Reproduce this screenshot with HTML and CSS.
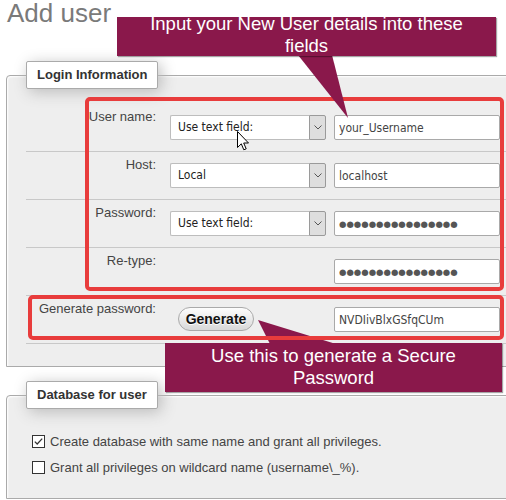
FILE: index.html
```html
<!DOCTYPE html>
<html>
<head>
<meta charset="utf-8">
<title>Add user</title>
<link rel="stylesheet" href="styles.css">
</head>
<body>
<div class="page">
  <h2 class="title">Add user</h2>

  <div class="fs fs-login">
    <div class="legend">Login Information</div>
    <div class="row">
      <div class="label">User name:</div>
      <div class="select"><span class="select-text">Use text field:</span><span class="select-arrow"><svg width="8" height="5" viewBox="0 0 8 5"><polyline points="0.5,0.5 4,4 7.5,0.5" fill="none" stroke="#555" stroke-width="1"/></svg></span></div>
      <input class="text" type="text" value="your_Username">
    </div>
    <div class="row">
      <div class="label">Host:</div>
      <div class="select"><span class="select-text">Local</span><span class="select-arrow"><svg width="8" height="5" viewBox="0 0 8 5"><polyline points="0.5,0.5 4,4 7.5,0.5" fill="none" stroke="#555" stroke-width="1"/></svg></span></div>
      <input class="text" type="text" value="localhost">
    </div>
    <div class="row">
      <div class="label">Password:</div>
      <div class="select"><span class="select-text">Use text field:</span><span class="select-arrow"><svg width="8" height="5" viewBox="0 0 8 5"><polyline points="0.5,0.5 4,4 7.5,0.5" fill="none" stroke="#555" stroke-width="1"/></svg></span></div>
      <input class="text pw" type="text" value="●●●●●●●●●●●●●●●●">
    </div>
    <div class="row">
      <div class="label">Re-type:</div>
      <input class="text pw col3" type="text" value="●●●●●●●●●●●●●●●●">
    </div>
    <div class="row">
      <div class="label">Generate password:</div>
      <div class="btn-cell"><button class="btn" type="button">Generate</button></div>
      <input class="text" type="text" value="NVDIivBlxGSfqCUm">
    </div>
  </div>

  <div class="fs fs-db">
    <div class="legend">Database for user</div>
    <div class="check"><span class="box"><svg width="13" height="13" viewBox="0 0 13 13"><rect x="0.5" y="0.5" width="12" height="12" fill="#fff" stroke="#333"/><polyline points="2.8,6.6 5.2,9 10.2,3.6" fill="none" stroke="#333" stroke-width="1.3"/></svg></span>Create database with same name and grant all privileges.</div>
    <div class="check"><span class="box"><svg width="13" height="13" viewBox="0 0 13 13"><rect x="0.5" y="0.5" width="12" height="12" fill="#fff" stroke="#333"/></svg></span>Grant all privileges on wildcard name (username\_%).</div>
  </div>

  <svg class="pointer pointer-1" width="506" height="500" viewBox="0 0 506 500"><polygon points="298,55 332,55 348,118" fill="#8a184b"/></svg>
  <svg class="pointer pointer-2" width="506" height="500" viewBox="0 0 506 500"><polygon points="258,320 270,344 336,344" fill="#8a184b"/></svg>

  <div class="hl hl-1"></div>
  <div class="hl hl-2"></div>

  <div class="callout callout-1"><div class="callout-text c1">Input your New User details into these<br>fields</div></div>
  <div class="callout callout-2"><div class="callout-text c2">Use this to generate a Secure<br>Password</div></div>

  <svg class="cursor" width="13" height="20" viewBox="0 0 13 20"><polygon points="0.5,0.5 0.5,16.5 4.3,12.8 6.8,18.8 9.2,17.8 6.7,12 11.5,12" fill="#fff" stroke="#000" stroke-width="1" stroke-linejoin="miter"/></svg>
</div>
</body>
</html>
```

FILE: styles.css
```css
html, body {
  margin: 0;
  padding: 0;
  background: #fff;
}

.page {
  position: relative;
  width: 506px;
  height: 500px;
  overflow: hidden;
  font-family: "Liberation Sans", Arial, sans-serif;
  font-size: 13px;
  color: #444;
}

.title {
  margin: 0;
  padding-left: 7px;
  font-size: 26px;
  line-height: 27px;
  height: 26px;
  font-weight: normal;
  color: #7a7a7a;
}

.fs {
  width: 560px;
  margin-left: 6px;
  border: 1px solid #aaa;
  border-radius: 4px 4px 0 0;
  background: #eee;
  box-shadow: inset 1px 1px 2px #fff;
  padding-left: 19px;
  box-sizing: border-box;
}

.fs-login {
  margin-top: 49px;
  padding-bottom: 22px;
}

.fs-db {
  margin-top: 28px;
  height: 104px;
}

.legend {
  display: block;
  width: max-content;
  margin-top: -15px;
  margin-bottom: 15px;
  padding: 5px 10px;
  border: 1px solid #aaa;
  border-radius: 2px;
  background: #fff;
  box-shadow: 3px 3px 15px #bbb;
  font-weight: bold;
  line-height: 16px;
  color: #333;
}

.fs-db .legend {
  margin-bottom: 20px;
}

.row {
  display: grid;
  grid-template-columns: 144px 164px 166px;
  height: 47px;
  border-bottom: 1px solid #c8c8c8;
  align-items: start;
}

.label {
  padding-top: 5px;
  padding-right: 14px;
  line-height: 16px;
  text-align: right;
}

.select {
  display: flex;
  margin-top: 11px;
  width: 156px;
  height: 25px;
  box-sizing: border-box;
}

.select-text {
  flex: 1;
  border: 1px solid #bdbdbd;
  border-right: none;
  border-radius: 2px 0 0 2px;
  background: #fff;
  padding-left: 7px;
  font-family: "DejaVu Sans Condensed", "Noto Sans", sans-serif;
  font-size: 12px;
  line-height: 23px;
  color: #222;
}

.select-arrow {
  width: 17px;
  box-sizing: border-box;
  border: 1px solid #9a9a9a;
  border-radius: 0 2px 2px 0;
  background: #dedede;
  display: flex;
  align-items: center;
  justify-content: center;
}

.text {
  margin: 11px 0 0 0;
  width: 166px;
  height: 25px;
  box-sizing: border-box;
  border: 1px solid #a9a9a9;
  border-radius: 2px;
  background: #fff;
  padding: 0 4px;
  font-family: "DejaVu Sans Condensed", "Noto Sans", sans-serif;
  font-size: 12px;
  color: #444;
  outline: none;
}

.pw {
  font-family: "DejaVu Sans", sans-serif;
  font-size: 8.5px;
  color: #555;
}

.col3 {
  grid-column: 3;
}

.btn-cell {
  padding-left: 8px;
}

.btn {
  margin-top: 11px;
  width: 76px;
  height: 24px;
  padding: 0;
  border: 1px solid #aaa;
  border-radius: 12px;
  background: linear-gradient(#fdfdfd, #d8d8d8);
  font-family: "Liberation Sans", Arial, sans-serif;
  font-size: 14px;
  font-weight: bold;
  color: #111;
  text-shadow: 0 1px 0 #fff;
}

.check {
  display: flex;
  align-items: flex-start;
  height: 16px;
  padding: 5px 0;
  line-height: 16px;
}

.box {
  display: block;
  width: 13px;
  height: 13px;
  margin: 1px 5px 0 6px;
}

.box svg {
  display: block;
}

.pointer {
  position: absolute;
  left: 0;
  top: 0;
}

.hl {
  position: absolute;
  border: 4px solid #e83c3c;
  border-radius: 5px;
  box-sizing: border-box;
}

.hl-1 {
  left: 85px;
  top: 97px;
  width: 419px;
  height: 194px;
}

.hl-2 {
  left: 28px;
  top: 295px;
  width: 476px;
  height: 45px;
}

.pointer-1 {
  z-index: 2;
}

.callout {
  position: absolute;
  background: #8a184b;
  box-shadow: 1px 1px 1px rgba(0, 0, 0, 0.35);
  color: #fff;
  text-align: center;
  font-family: "Liberation Sans", Arial, sans-serif;
  font-size: 18.5px;
  z-index: 3;
}

.callout-1 {
  left: 117px;
  top: 17px;
  width: 379px;
  height: 39px;
}

.callout-2 {
  left: 165px;
  top: 343px;
  width: 337px;
  height: 49px;
}

.c1 {
  margin-top: -4px;
  line-height: 21.5px;
}

.c2 {
  padding-top: 2px;
  line-height: 22px;
}

.cursor {
  position: absolute;
  left: 237px;
  top: 131px;
  z-index: 4;
}
```
